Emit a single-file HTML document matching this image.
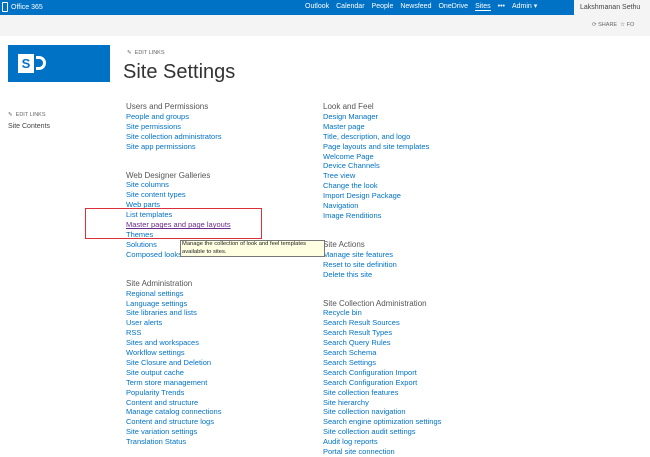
<!DOCTYPE html>
<html><head><meta charset="utf-8"><style>
*{margin:0;padding:0;box-sizing:border-box}
body{width:650px;height:453px;overflow:hidden;background:#fff;font-family:"Liberation Sans",sans-serif;position:relative}
.top{position:absolute;left:0;top:0;width:650px;height:15px;background:#0072c6}
.user{position:absolute;left:574px;top:0;width:76px;height:15px;background:#f4f4f4;color:#444;font-size:7px;line-height:15px;padding-left:6px}
.sub{position:absolute;left:0;top:15px;width:650px;height:21px;background:#f4f4f4}
.nav{position:absolute;top:0;left:305px;color:#fff;font-size:7px;line-height:14px;white-space:nowrap;word-spacing:0}
.nav span{margin-right:7px}
.logo{position:absolute;left:8px;top:45px;width:102px;height:37px;background:#0072c6}
.col{position:absolute;font-size:7.5px;line-height:9.9px;color:#0072c6;white-space:nowrap}
.col .h{color:#555;font-size:8px;line-height:9.9px}
.col .gap{height:19px}
</style></head><body>
<div class="top"></div>
<div style="position:absolute;left:2px;top:2px;width:6px;height:10px;border:1.5px solid #fff;border-radius:1px"></div>
<div style="position:absolute;left:11px;top:0;color:#fff;font-size:7px;line-height:15px">Office 365</div>
<div class="nav"><span>Outlook</span><span>Calendar</span><span>People</span><span>Newsfeed</span><span>OneDrive</span><span style="border-bottom:1px solid #fff">Sites</span><span>•••</span><span>Admin ▾</span></div>
<div class="user">Lakshmanan Sethu</div>
<div class="sub"></div>
<div style="position:absolute;left:592px;top:22px;font-size:5.5px;color:#666">⟳ SHARE &nbsp;☆ FO</div>
<div class="logo"><div style="position:absolute;left:10px;top:9px;width:16px;height:19px;background:#fff;color:#0072c6;font-weight:bold;font-size:13px;line-height:19px;text-align:center">S</div><div style="position:absolute;left:28px;top:11px;width:10px;height:14px;border:3px solid #fff;border-left:none;border-radius:0 7px 7px 0"></div></div>
<div style="position:absolute;left:127px;top:50px;font-size:5.5px;color:#666">✎ &nbsp;EDIT LINKS</div>
<div style="position:absolute;left:123px;top:61px;font-size:20px;color:#333;font-weight:300">Site Settings</div>
<div style="position:absolute;left:8px;top:112px;font-size:5.5px;color:#666">✎ &nbsp;EDIT LINKS</div>
<div style="position:absolute;left:8px;top:123px;font-size:7px;color:#444">Site Contents</div>

<div class="col" style="left:126px;top:102px">
<div class="h">Users and Permissions</div>
<div>People and groups</div><div>Site permissions</div><div>Site collection administrators</div><div>Site app permissions</div>
<div class="gap"></div>
<div class="h">Web Designer Galleries</div>
<div>Site columns</div><div>Site content types</div><div>Web parts</div><div>List templates</div><div style="text-decoration:underline;color:#6a2b8a">Master pages and page layouts</div><div>Themes</div><div>Solutions</div><div>Composed looks</div>
<div class="gap"></div>
<div class="h">Site Administration</div>
<div>Regional settings</div><div>Language settings</div><div>Site libraries and lists</div><div>User alerts</div><div>RSS</div><div>Sites and workspaces</div><div>Workflow settings</div><div>Site Closure and Deletion</div><div>Site output cache</div><div>Term store management</div><div>Popularity Trends</div><div>Content and structure</div><div>Manage catalog connections</div><div>Content and structure logs</div><div>Site variation settings</div><div>Translation Status</div>
</div>

<div class="col" style="left:323px;top:102px">
<div class="h">Look and Feel</div>
<div>Design Manager</div><div>Master page</div><div>Title, description, and logo</div><div>Page layouts and site templates</div><div>Welcome Page</div><div>Device Channels</div><div>Tree view</div><div>Change the look</div><div>Import Design Package</div><div>Navigation</div><div>Image Renditions</div>
<div class="gap"></div>
<div class="h">Site Actions</div>
<div>Manage site features</div><div>Reset to site definition</div><div>Delete this site</div>
<div class="gap"></div>
<div class="h">Site Collection Administration</div>
<div>Recycle bin</div><div>Search Result Sources</div><div>Search Result Types</div><div>Search Query Rules</div><div>Search Schema</div><div>Search Settings</div><div>Search Configuration Import</div><div>Search Configuration Export</div><div>Site collection features</div><div>Site hierarchy</div><div>Site collection navigation</div><div>Search engine optimization settings</div><div>Site collection audit settings</div><div>Audit log reports</div><div>Portal site connection</div>
</div>

<div style="position:absolute;left:85px;top:208px;width:177px;height:31px;border:1.5px solid #d9303a"></div>
<div style="position:absolute;left:180px;top:240px;width:145px;height:17px;background:#ffffe1;border:1px solid #777;font-size:5.8px;line-height:7.5px;color:#222;padding:0 1px">Manage the collection of look and feel templates available to sites.</div>
</body></html>
